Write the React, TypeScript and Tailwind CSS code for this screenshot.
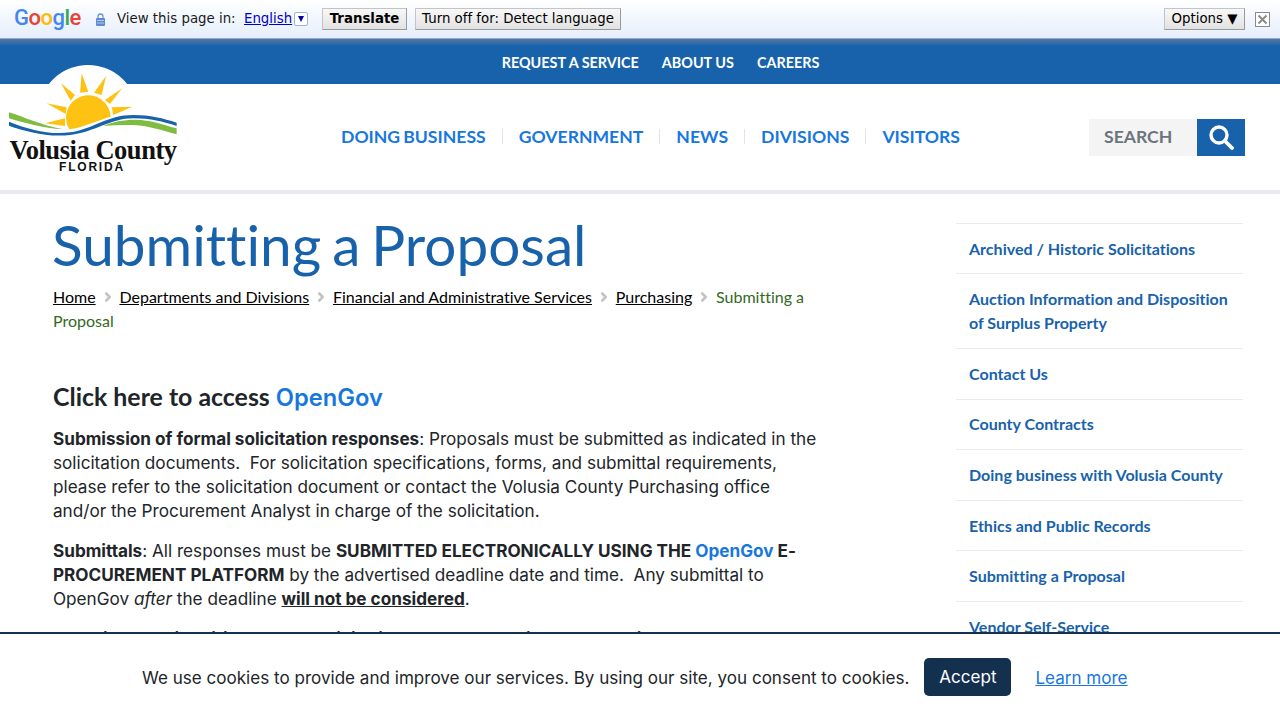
import React from "react";
import { ChevronRight } from "lucide-react";

const topLinks = ["REQUEST A SERVICE", "ABOUT US", "CAREERS"];
const navLinks = ["DOING BUSINESS", "GOVERNMENT", "NEWS", "DIVISIONS", "VISITORS"];
const crumbs = ["Home", "Departments and Divisions", "Financial and Administrative Services", "Purchasing"];
const sideLinks = [
  "Archived / Historic Solicitations",
  "Auction Information and Disposition of Surplus Property",
  "Contact Us",
  "County Contracts",
  "Doing business with Volusia County",
  "Ethics and Public Records",
  "Submitting a Proposal",
  "Vendor Self-Service",
];

const barButton =
  "h-[22px] border border-[#c4c4c4] border-r-[#9a9a9a] border-b-[#9a9a9a] bg-gradient-to-b from-[#f8f8f8] to-[#e2e2e2] text-[13.33px] leading-none text-black";

const TranslateBar = () => (
  <div className="h-[39px] flex items-center bg-gradient-to-b from-white to-[#e4eefb] border-b border-b-[#8ea6dc] font-['DejaVu_Sans',sans-serif] text-[13.33px] text-[#1a1a1a]">
    <div className="w-[67px] ml-[14px] text-[22px] leading-none font-medium font-['Roboto',sans-serif] tracking-[-0.5px] -mt-[3px] flex">
      <span className="text-[#4285f4]">G</span>
      <span className="text-[#ea4335]">o</span>
      <span className="text-[#fbbc05]">o</span>
      <span className="text-[#4285f4]">g</span>
      <span className="text-[#34a853]">l</span>
      <span className="text-[#ea4335]">e</span>
    </div>
    <svg className="ml-[15px]" width="9" height="13" viewBox="0 0 9 13">
      <path d="M2 5V3.5a2.5 2.5 0 0 1 5 0V5" fill="none" stroke="#6f93cf" strokeWidth="1.3" />
      <rect y="5" width="9" height="8" rx="1" fill="#5f8ad0" />
      <path d="M1 7.5h7M1 10h7" stroke="#c9d9f2" strokeWidth="0.8" />
    </svg>
    <span className="ml-[12px] w-[127px]">View this page in:</span>
    <a className="text-[#0000cc] underline w-[50px]">English</a>
    <span className="w-[14px] h-[14px] border border-[#9db4d8] rounded-[2px] bg-white flex items-center justify-center">
      <span className="w-0 h-0 border-l-[3.5px] border-r-[3.5px] border-t-[6px] border-l-transparent border-r-transparent border-t-[#0000aa]" />
    </span>
    <button className={`${barButton} ml-[14px] w-[85px] font-bold`}>Translate</button>
    <button className={`${barButton} ml-[8px] w-[206px]`}>Turn off for: Detect language</button>
    <button className={`${barButton} ml-auto w-[81px]`}>Options ▼</button>
    <button className="ml-[10px] mr-[10px] w-[15px] h-[15px] border border-[#8a8a8a] flex items-center justify-center bg-white">
      <svg width="11" height="11" viewBox="0 0 11 11">
        <path d="M1.5 1.5l8 8M9.5 1.5l-8 8" stroke="#8a8a8a" strokeWidth="2" />
      </svg>
    </button>
  </div>
);

const Logo = () => (
  <div className="absolute left-0 top-[21px] w-[200px] h-[115px]">
    <svg width="200" height="120" viewBox="0 180 600 360" className="absolute left-0 top-0">
      <circle cx="264" cy="345" r="150" fill="#fff" />
      <g fill="#fec312">
        <path d="M208 388A67 67 0 1 1 332 350C290 362 250 382 208 388z" />
        <path d="M245 220l-5 58 25-3zM318 228l-36 50 23 7zM366 265l-51 35 15 12zM397 320l-62 2 5 23zM183 250l29 52 13-17zM140 310l60 12-3 20zM135 370l60-15v23z" />
      </g>
      <path d="M27 365C90 390 150 405 210 397 280 388 320 345 400 345 450 345 490 355 530 368V378C490 365 450 355 400 355 330 355 290 395 210 405 140 412 80 395 27 377Z" fill="#1862ac" stroke="#fff" strokeWidth="4" paintOrder="stroke" />
      <path d="M27 337C70 350 120 375 190 388 130 385 70 368 27 355Z" fill="#7fbc42" />
      <path d="M310 378C350 360 400 355 440 362 480 368 500 378 530 385V403C490 392 450 378 400 375 370 374 340 375 310 378Z" fill="#7fbc42" />
    </svg>
    <div className="absolute left-[9px] top-[74px] w-[168px] text-center font-['Liberation_Serif',serif] font-bold text-[26.5px] leading-[32px] tracking-[-0.45px] text-[#111] whitespace-nowrap">
      Volusia County
    </div>
    <div className="absolute left-[59px] top-[101px] font-['Liberation_Sans',sans-serif] font-bold text-[12px] leading-[12px] tracking-[1.8px] text-[#111]">
      FLORIDA
    </div>
  </div>
);

const Header = () => (
  <div className="relative font-['Lato',sans-serif]">
    <div className="h-[45px] pt-[2px] bg-[#1862ac] bg-gradient-to-b from-[#54789f] via-[#1862ac] via-[15%] to-[#1862ac] flex items-center justify-center gap-[23px] pl-[41px] text-[14.4px] font-bold text-white">
      {topLinks.map((l) => (
        <a key={l}>{l}</a>
      ))}
    </div>
    <div className="h-[110px] border-b-4 border-b-[#e6eaee] bg-white flex items-center">
      <div className="ml-[341px] flex items-center text-[17.6px] font-bold text-[#1877dd] [word-spacing:-1.2px]">
        {navLinks.map((l, i) => (
          <React.Fragment key={l}>
            {i > 0 && <span className="mx-[16px] w-px h-[15px] bg-[#dfe5eb]" />}
            <a>{l}</a>
          </React.Fragment>
        ))}
      </div>
      <div className="ml-auto mr-[35px] flex h-[37px]">
        <div className="w-[108px] bg-[#f4f4f4] pl-[15px] flex items-center text-[17.6px] font-bold text-[#6c757d]">SEARCH</div>
        <div className="w-[48px] bg-[#1862ac] flex items-center justify-center">
          <svg width="26" height="26" viewBox="0 0 26 26" fill="none" stroke="#fff" strokeLinecap="round">
            <circle cx="11" cy="11" r="8" strokeWidth="3.4" />
            <path d="M17 17l7 7" strokeWidth="3.8" />
          </svg>
        </div>
      </div>
    </div>
    <Logo />
  </div>
);

const Content = () => (
  <div className="w-[770px] ml-[53px] shrink-0">
    <h1 className="mt-[14px] -ml-[1px] font-['Lato',sans-serif] text-[56.7px] leading-[72px] text-[#1862ac] [word-spacing:-3.5px]">Submitting a Proposal</h1>
    <div className="mt-[5px] w-[765px] font-['Lato',sans-serif] text-[16px] leading-[24px] text-[#33691e]">
      {crumbs.map((c) => (
        <React.Fragment key={c}>
          <a className="text-black underline">{c}</a>
          <ChevronRight className="inline-block w-[14px] h-[14px] mx-[4.9px] -mt-[3px] text-[#c4c4c4]" strokeWidth={4.5} />
        </React.Fragment>
      ))}
      Submitting a Proposal
    </div>
    <h2 className="mt-[47px] font-['Lato',sans-serif] font-bold text-[24.9px] leading-[32px] text-[#212529]">
      Click here to access <a className="font-['Inter',sans-serif] font-semibold text-[23.7px] text-[#1877dd]">OpenGov</a>
    </h2>
    <div className="font-['Inter',sans-serif] text-[17.15px] leading-[24px] text-[#212529]">
      <p className="mt-[13px]">
        <strong>Submission of formal solicitation responses</strong>: Proposals must be submitted as indicated in the
        solicitation documents.&nbsp; For solicitation specifications, forms, and submittal requirements, please refer to
        the solicitation document or contact the Volusia County Purchasing office and/or the Procurement Analyst in
        charge of the solicitation.
      </p>
      <p className="mt-[16px]">
        <strong>Submittals</strong>: All responses must be <strong>SUBMITTED ELECTRONICALLY USING THE <a className="text-[#1877dd]">OpenGov</a> E-PROCUREMENT PLATFORM</strong> by the advertised deadline date and time.&nbsp; Any
        submittal to OpenGov <em>after</em> the deadline <strong className="underline">will not be considered</strong>.
      </p>
      <p className="mt-[16px]">
        <strong>Questions</strong>: <strong>All inquiries on any solicitation must be submitted electronically</strong>
      </p>
    </div>
  </div>
);

const Sidebar = () => (
  <div className="ml-[133px] mt-[28.8px] w-[287px] border-t border-t-[#e9ecef] font-['Lato',sans-serif] text-[16.05px] leading-[24px] font-bold text-[#1862ac]">
    {sideLinks.map((l) => (
      <div key={l} className="px-[13px] py-[12.8px] border-b border-b-[#e9ecef]">
        {l}
      </div>
    ))}
  </div>
);

const CookieBar = () => (
  <div className="absolute left-0 right-0 bottom-0 h-[88px] border-t-2 border-t-[#14304f] bg-white flex items-center font-['Inter',sans-serif] text-[17.07px] pl-[142px]">
    <span className="mt-[1px] text-[#212529]">We use cookies to provide and improve our services. By using our site, you consent to cookies.</span>
    <button className="ml-[15px] w-[87px] h-[38px] rounded-[5px] bg-[#14304f] text-white">Accept</button>
    <a className="mt-[1px] ml-[24px] text-[#1877dd] underline">Learn more</a>
  </div>
);

export default function App() {
  return (
    <div className="relative h-[720px] w-[1280px] overflow-hidden bg-white [font-variant-ligatures:none]">
      <TranslateBar />
      <Header />
      <div className="flex">
        <Content />
        <Sidebar />
      </div>
      <CookieBar />
    </div>
  );
}
